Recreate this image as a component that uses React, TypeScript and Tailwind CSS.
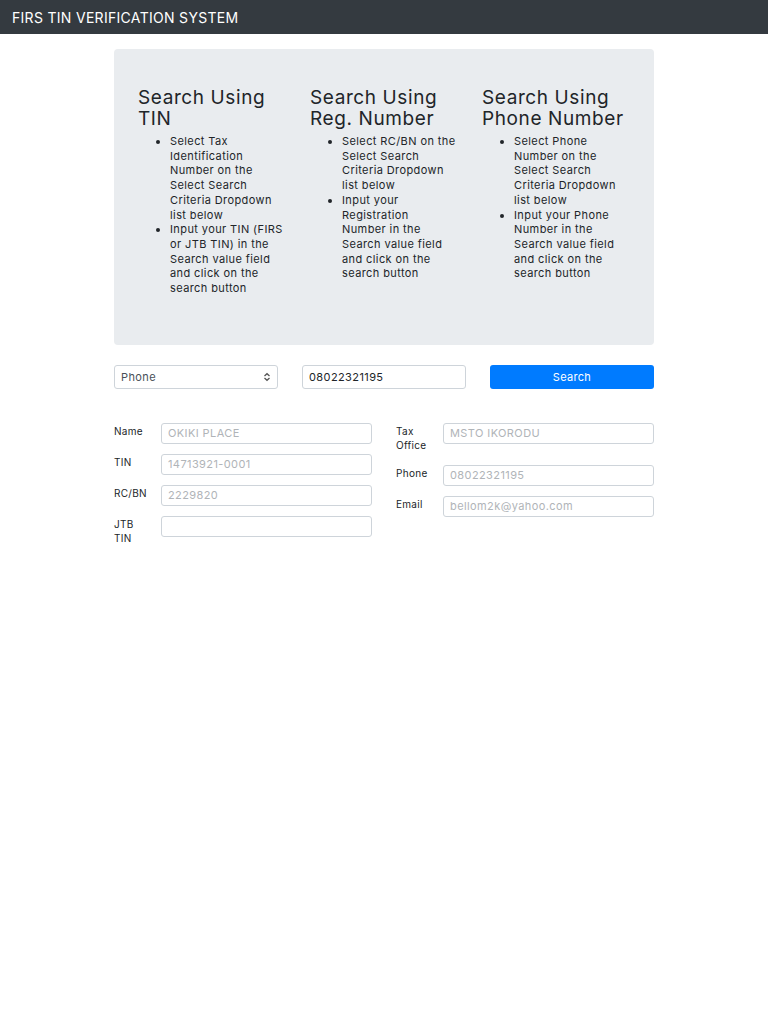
const columns = [
  {
    title: ["Search Using", "TIN"],
    items: [
      ["Select Tax", "Identification", "Number on the", "Select Search", "Criteria Dropdown", "list below"],
      ["Input your TIN (FIRS", "or JTB TIN) in the", "Search value field", "and click on the", "search button"],
    ],
  },
  {
    title: ["Search Using", "Reg. Number"],
    items: [
      ["Select RC/BN on the", "Select Search", "Criteria Dropdown", "list below"],
      ["Input your", "Registration", "Number in the", "Search value field", "and click on the", "search button"],
    ],
  },
  {
    title: ["Search Using", "Phone Number"],
    items: [
      ["Select Phone", "Number on the", "Select Search", "Criteria Dropdown", "list below"],
      ["Input your Phone", "Number in the", "Search value field", "and click on the", "search button"],
    ],
  },
]

const leftFields = [
  { label: "Name", value: "OKIKI PLACE" },
  { label: "TIN", value: "14713921-0001" },
  { label: "RC/BN", value: "2229820" },
  { label: "JTB TIN", value: "" },
]

const rightFields = [
  { label: "Tax Office", value: "MSTO IKORODU" },
  { label: "Phone", value: "08022321195" },
  { label: "Email", value: "bellom2k@yahoo.com" },
]

const Field = ({ label, value }: { label: string; value: string }) => {
  return (
    <div className="flex items-start">
      <label className="w-[36px] shrink-0 mr-[11px] pt-[2px] pb-[3px] text-[10px] leading-[13.5px] tracking-[0.3px] text-[#212529]">{label}</label>
      <div className="flex-1 h-[21px] border border-[#ced4da] rounded-[3px] px-[6px] flex items-center text-[11px] tracking-[0.4px] text-[#b0b4b8]">
        {value}
      </div>
    </div>
  )
}

const App = () => {
  return (
    <div className="min-h-screen bg-white font-['Inter',sans-serif] text-[#212529]">
      <nav className="h-[34px] bg-[#343a40] flex items-center px-[12px]">
        <span className="text-white text-[14px] tracking-[0.3px]">FIRS TIN VERIFICATION SYSTEM</span>
      </nav>

      <div className="w-[540px] mx-auto mt-[15px]">
        <div className="bg-[#e9ecef] rounded-[4px] h-[296px] pl-[24px] pt-[38px] grid grid-cols-3">
          {columns.map((col) => (
            <div key={col.title[1]}>
              <h2 className="text-[19px] leading-[21px] font-normal tracking-[0.6px] text-[#212529]">
                {col.title[0]}
                <br />
                {col.title[1]}
              </h2>
              <ul className="mt-[5px] pl-[32px] list-disc text-[11px] leading-[14.7px] tracking-[0.4px] text-[#212529] whitespace-nowrap">
                {col.items.map((lines) => (
                  <li key={lines[0]}>
                    {lines.map((line) => (
                      <span key={line} className="block">{line}</span>
                    ))}
                  </li>
                ))}
              </ul>
            </div>
          ))}
        </div>

        <div className="mt-[20px] grid grid-cols-3 gap-[24px]">
          <div className="h-[24px] border border-[#ced4da] rounded-[3px] pl-[6px] pr-[5px] flex items-center justify-between text-[11px] tracking-[0.4px] text-[#495057]">
            <span>Phone</span>
            <svg width="10" height="10" viewBox="0 0 10 10" fill="none" stroke="#555" strokeWidth="1.3">
              <path d="M2.5 4 L5 1.7 L7.5 4" />
              <path d="M2.5 6 L5 8.3 L7.5 6" />
            </svg>
          </div>
          <div className="h-[24px] border border-[#ced4da] rounded-[3px] px-[6px] flex items-center text-[11px] tracking-[0.4px] text-[#212529]">
            08022321195
          </div>
          <button className="h-[24px] rounded-[3px] bg-[#007bff] text-white text-[11px] tracking-[0.3px]">Search</button>
        </div>

        <div className="mt-[34px] grid grid-cols-2 gap-[24px] items-start">
          <div className="flex flex-col gap-[10px]">
            {leftFields.map((f) => (
              <Field key={f.label} label={f.label} value={f.value} />
            ))}
          </div>
          <div className="flex flex-col gap-[10px]">
            {rightFields.map((f) => (
              <Field key={f.label} label={f.label} value={f.value} />
            ))}
          </div>
        </div>
      </div>
    </div>
  )
}

export default App
